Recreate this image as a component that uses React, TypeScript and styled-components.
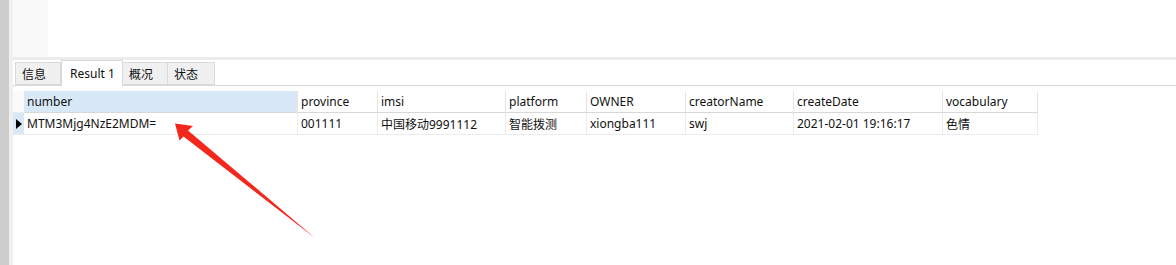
import React from "react";
import styled, { createGlobalStyle } from "styled-components";

const GlobalStyle = createGlobalStyle`
  html, body {
    margin: 0;
    padding: 0;
    background: #ffffff;
  }
  body {
    font-family: "Noto Sans", "Noto Sans CJK SC", sans-serif;
    font-size: 12px;
    color: #111111;
  }
`

const Page = styled.div`
  position: relative;
  display: flex;
  flex-direction: row;
  width: 1176px;
  height: 265px;
  overflow: hidden;
`

const ScrollRail = styled.div`
  width: 9px;
  background-color: #cdcdcd;
`

const Gutter = styled.div`
  width: 4px;
  background-color: #f0f0f0;
`

const Main = styled.div`
  flex: 1;
  display: flex;
  flex-direction: column;
`

const EditorPane = styled.div`
  height: 57px;
  display: flex;
  flex-direction: row;
`

const LineNumbers = styled.div`
  width: 35px;
  background-color: #f9f9f9;
`

const Splitter = styled.div`
  height: 3px;
  background-color: #ececec;
`

const TabBar = styled.div`
  height: 25px;
  display: flex;
  flex-direction: row;
  align-items: flex-end;
  padding-left: 2px;
  border-bottom: 1px solid #d9d9d9;
`

const Tab = styled.div<{ $active?: boolean; $first?: boolean; $width: number }>`
  box-sizing: border-box;
  width: ${p => p.$width}px;
  height: ${p => (p.$active ? 26 : 23)}px;
  margin-bottom: ${p => (p.$active ? -1 : 0)}px;
  padding-left: ${p => (p.$active ? 8 : 6)}px;
  display: flex;
  align-items: center;
  background-color: ${p => (p.$active ? "#ffffff" : "#f0f0f0")};
  border: 1px solid #d9d9d9;
  border-bottom: ${p => (p.$active ? "none" : "1px solid #d9d9d9")};
  border-left: ${p => (p.$first || p.$active ? "1px solid #d9d9d9" : "none")};
  color: #111111;
  white-space: nowrap;
`

const GridWrap = styled.div`
  padding-top: 5px;
`

const Grid = styled.div`
  display: grid;
  grid-template-columns: 11px 274px 80px 128px 81px 99px 108px 149px 95px;
  width: max-content;
`

const Cell = styled.div<{ $header?: boolean; $selected?: boolean }>`
  box-sizing: border-box;
  height: 22px;
  padding-left: 3px;
  display: flex;
  align-items: center;
  white-space: nowrap;
  background-color: ${p => (p.$selected ? "#d9e8f6" : "#ffffff")};
  border-right: 1px solid ${p => (p.$header ? "#e4e4e4" : "#ececec")};
  border-bottom: 1px solid ${p => (p.$header ? "#d8d8d8" : "#ececec")};
  color: #111111;
`

const Indicator = styled.div<{ $current?: boolean }>`
  box-sizing: border-box;
  height: 22px;
  display: flex;
  align-items: center;
  justify-content: center;
  background-color: ${p => (p.$current ? "#d9e8f6" : "#fafafa")};
  border-bottom: 1px solid #ececec;
`

const Triangle = styled.div`
  width: 0;
  height: 0;
  border-top: 5px solid transparent;
  border-bottom: 5px solid transparent;
  border-left: 6px solid #000000;
  margin-left: 1px;
`

const ArrowLayer = styled.svg`
  position: absolute;
  left: 0;
  top: 0;
  pointer-events: none;
`

const columns = ["number", "province", "imsi", "platform", "OWNER", "creatorName", "createDate", "vocabulary"]
const row = ["MTM3Mjg4NzE2MDM=", "001111", "中国移动9991112", "智能拨测", "xiongba111", "swj", "2021-02-01 19:16:17", "色情"]

const tabs = [
  { label: "信息", width: 46 },
  { label: "Result 1", width: 62, active: true },
  { label: "概况", width: 45 },
  { label: "状态", width: 47 },
]

export default function App() {
  return (
    <>
      <GlobalStyle />
      <Page>
        <ScrollRail />
        <Gutter />
        <Main>
          <EditorPane>
            <LineNumbers />
          </EditorPane>
          <Splitter />
          <TabBar>
            {tabs.map((t, i) => (
              <Tab key={t.label} $width={t.width} $active={t.active} $first={i === 0}>
                {t.label}
              </Tab>
            ))}
          </TabBar>
          <GridWrap>
            <Grid>
              <Indicator />
              {columns.map((c, i) => (
                <Cell key={c} $header $selected={i === 0}>{c}</Cell>
              ))}
              <Indicator $current><Triangle /></Indicator>
              {row.map((v, i) => (
                <Cell key={i}>{v}</Cell>
              ))}
            </Grid>
          </GridWrap>
        </Main>
        <ArrowLayer width="1176" height="265" viewBox="0 0 1176 265">
          <polygon
            points="175,123.5 193,126 188,130.5 315,238 183.5,136.5 179.5,140.5"
            fill="#f4271c"
          />
        </ArrowLayer>
      </Page>
    </>
  )
}
